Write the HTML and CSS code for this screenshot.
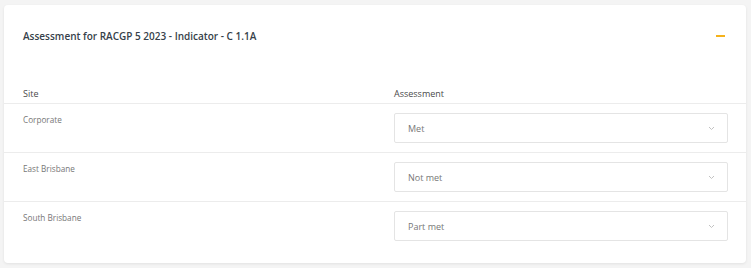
FILE: index.html
```html
<!DOCTYPE html>
<html lang="en">
<head>
  <meta charset="UTF-8">
  <title>Assessment</title>
  <link rel="stylesheet" href="styles.css">
</head>
<body>
  <div class="card">
    <div class="card_header">
      <span class="title">Assessment for RACGP 5 2023 - Indicator - C 1.1A</span>
      <span class="collapse"></span>
    </div>
    <div class="table">
      <div class="row head">
        <div class="site">Site</div>
        <div class="assess">Assessment</div>
      </div>
      <div class="row">
        <div class="site">Corporate</div>
        <div class="assess">
          <div class="select">
            <span>Met</span>
            <svg width="7" height="5" viewBox="0 0 7 5"><path d="M1 1 L3.5 3.5 L6 1" fill="none" stroke="#c2c2c2" stroke-width="1"/></svg>
          </div>
        </div>
      </div>
      <div class="row">
        <div class="site">East Brisbane</div>
        <div class="assess">
          <div class="select">
            <span>Not met</span>
            <svg width="7" height="5" viewBox="0 0 7 5"><path d="M1 1 L3.5 3.5 L6 1" fill="none" stroke="#c2c2c2" stroke-width="1"/></svg>
          </div>
        </div>
      </div>
      <div class="row last">
        <div class="site">South Brisbane</div>
        <div class="assess">
          <div class="select">
            <span>Part met</span>
            <svg width="7" height="5" viewBox="0 0 7 5"><path d="M1 1 L3.5 3.5 L6 1" fill="none" stroke="#c2c2c2" stroke-width="1"/></svg>
          </div>
        </div>
      </div>
    </div>
  </div>
</body>
</html>
```

FILE: styles.css
```css
body {
  margin: 0;
  padding: 5px 5px 5px 4px;
  background-color: #f4f4f4;
  font-family: "Open Sans", sans-serif;
}

.card {
  width: 742px;
  height: 258px;
  box-sizing: border-box;
  background-color: #ffffff;
  border-radius: 4px;
  box-shadow: 0 1px 3px rgba(0, 0, 0, 0.08);
}

.card_header {
  display: flex;
  align-items: center;
  justify-content: space-between;
  padding: 24px 21px 24px 19px;
  line-height: 14px;
}

.title {
  font-size: 10px;
  font-weight: 600;
  color: #363f4a;
}

.collapse {
  width: 9px;
  height: 2px;
  background-color: #f5b21b;
}

.row {
  display: grid;
  grid-template-columns: 390px 1fr;
  border-bottom: 1px solid #ececec;
  padding: 9px 18px 9px 0;
}

.row.head {
  padding: 20px 18px 2px 0;
  line-height: 14px;
  font-size: 9px;
  color: #4a4a4a;
}

.row.last {
  border-bottom: 0;
}

.site {
  padding-left: 19px;
  font-size: 8.2px;
  line-height: 13px;
  color: #777777;
}

.head .site {
  font-size: 9px;
  line-height: 14px;
  color: #4a4a4a;
}

.select {
  height: 30px;
  box-sizing: border-box;
  border: 1px solid #e4e4e4;
  border-radius: 2px;
  display: flex;
  align-items: center;
  justify-content: space-between;
  padding: 0 12px 0 13px;
  font-size: 9px;
  color: #777777;
}
```
